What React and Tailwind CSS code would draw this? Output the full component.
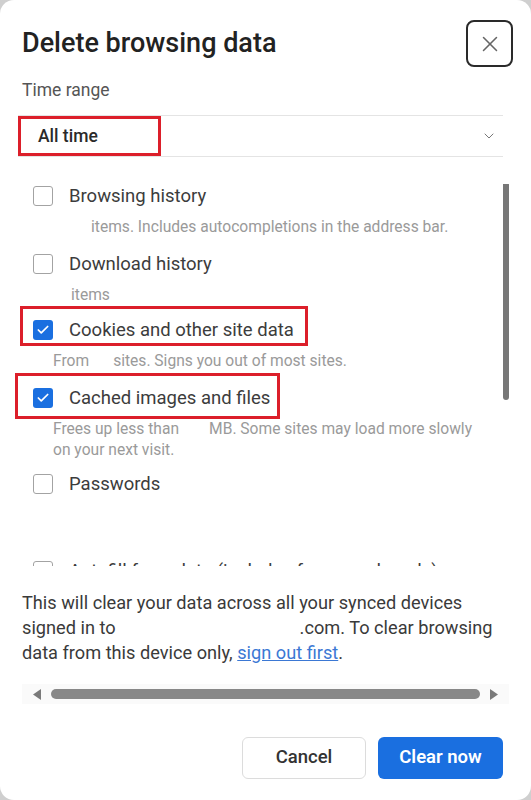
import { Check, X, ChevronDown } from 'lucide-react'

const font = { fontFamily: 'Roboto, "Noto Sans", Arial, sans-serif' }

function Box({ checked }) {
  return checked ? (
    <span className="w-[20px] h-[20px] rounded-[3px] bg-[#1a6fe0] flex items-center justify-center shrink-0">
      <Check size={14} strokeWidth={3} className="text-white" />
    </span>
  ) : (
    <span className="w-[20px] h-[20px] rounded-[3px] border-[1.5px] border-[#a3a3a3] bg-white shrink-0" />
  )
}

function Row({ label, checked, mark, children, gap = 13 }) {
  return (
    <div style={{ marginBottom: gap }}>
      <div className="relative flex items-center h-[24px] gap-[16px]">
        <Box checked={checked} />
        <span className="text-[18.5px] text-[#3c3c3c] leading-[24px] whitespace-nowrap">{label}</span>
        {mark}
      </div>
      {children}
    </div>
  )
}

function Sub({ children }) {
  return <div className="mt-[9px] text-[15.6px] leading-[21px] text-[#9a9a9a] whitespace-nowrap">{children}</div>
}

export default function App() {
  return (
    <div className="w-[531px] h-[800px] bg-[#cfcfcf]" style={font}>
      <div className="h-full bg-white rounded-[14px] flex flex-col">
        {/* Header */}
        <div className="flex items-center justify-between pt-[20px] pl-[22px] pr-[18px]">
          <h1 className="text-[27px] font-medium text-[#222] leading-[47px]">Delete browsing data</h1>
          <button className="w-[47px] h-[47px] rounded-[8px] border-2 border-[#2a2a2a] flex items-center justify-center">
            <X size={26} strokeWidth={1.4} className="text-[#666]" />
          </button>
        </div>

        <div className="mt-[11px] px-[22px] text-[17.5px] leading-[24px] text-[#555]">Time range</div>

        {/* Dropdown */}
        <div className="mt-[13px] ml-[18px] mr-[28px] h-[42px] border-y border-[#e4e4e4] flex items-center justify-between">
          <span className="h-full w-[143px] border-[3px] border-[#dc1f2a] flex items-center pl-[17px] text-[17.5px] font-medium text-[#2a2a2a]">
            All time
          </span>
          <ChevronDown size={16} strokeWidth={1.5} className="text-[#777] mr-[6px]" />
        </div>

        {/* List */}
        <div className="mt-[27px] h-[382px] flex pl-[33px] pr-[22px] overflow-hidden">
          <div className="flex-1 min-w-0">
            <Row label="Browsing history" gap={14}>
              <Sub><span className="pl-[58px]">items. Includes autocompletions in the address bar.</span></Sub>
            </Row>
            <Row label="Download history" gap={12}>
              <Sub><span className="pl-[38px]">items</span></Sub>
            </Row>
            <Row
              label="Cookies and other site data"
              checked
              gap={14}
              mark={<span className="absolute left-[-13px] top-[-12px] w-[288px] h-[40px] border-[3px] border-[#dc1f2a]" />}
            >
              <Sub>
                <span className="pl-[20px]">From</span>
                <span className="inline-block w-[24px]" />
                sites. Signs you out of most sites.
              </Sub>
            </Row>
            <Row
              label="Cached images and files"
              checked
              gap={11}
              mark={<span className="absolute left-[-18px] top-[-13px] w-[265px] h-[46px] border-[3px] border-[#dc1f2a]" />}
            >
              <Sub>
                <div className="pl-[20px]">
                  Frees up less than<span className="inline-block w-[30px]" />MB. Some sites may load more slowly
                  <br />
                  on your next visit.
                </div>
              </Sub>
            </Row>
            <Row label="Passwords" gap={63} />
            <Row label="Autofill form data (includes forms and cards)" gap={0} />
          </div>
          <div className="w-[6px] shrink-0">
            <div className="mt-[-2px] h-[218px] rounded-full bg-[#777]" />
          </div>
        </div>

        {/* Sync notice */}
        <p className="mt-[24px] px-[22px] text-[18.2px] leading-[25px] text-[#3a3a3a] whitespace-nowrap">
          This will clear your data across all your synced devices
          <br />
          signed in to<span className="inline-block w-[184px]" />.com. To clear browsing
          <br />
          data from this device only, <a className="text-[#3b78d4] underline">sign out first</a>.
        </p>

        {/* Horizontal scrollbar */}
        <div className="mt-[19px] mx-[22px] h-[20px] bg-[#fafafa] flex items-center gap-[10px] px-[11px]">
          <svg width="8" height="11" viewBox="0 0 8 11"><path d="M8 0 L0 5.5 L8 11 Z" fill="#7a7a7a" /></svg>
          <div className="flex-1 h-[10px] rounded-full bg-[#888]" />
          <svg width="8" height="11" viewBox="0 0 8 11"><path d="M0 0 L8 5.5 L0 11 Z" fill="#7a7a7a" /></svg>
        </div>

        {/* Buttons */}
        <div className="mt-[33px] flex justify-end gap-[12px] pr-[28px]">
          <button className="w-[124px] h-[42px] rounded-[6px] border border-[#dcdcdc] bg-white text-[18.5px] font-medium text-[#333]">
            Cancel
          </button>
          <button className="w-[125px] h-[42px] rounded-[6px] bg-[#1a6fe0] text-[18.5px] font-semibold text-white">
            Clear now
          </button>
        </div>
      </div>
    </div>
  )
}
